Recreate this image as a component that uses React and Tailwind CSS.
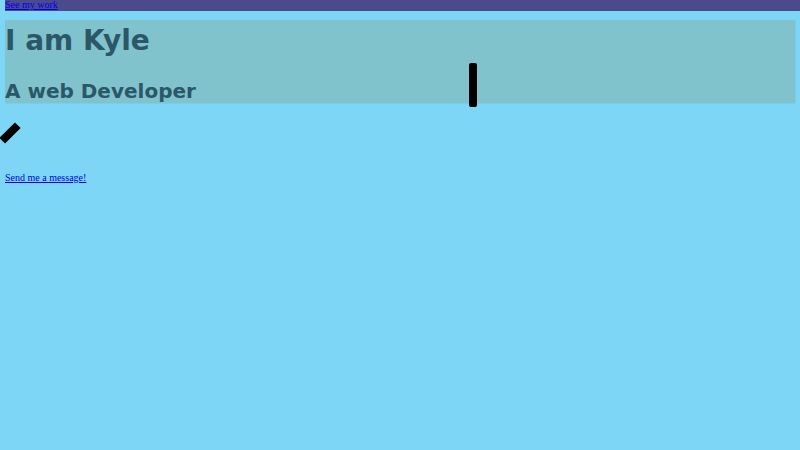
import React from 'react';

const App = () => {
  return (
    <div className="relative min-h-[450px] bg-[#7dd6f5] pl-[5px] pr-[5px] font-['Liberation_Serif',serif]">
      {/* Nav */}
      <nav className="-mr-[5px] h-[11px] bg-[#4a4a8c] text-[10px] leading-[10px]">
        <a href="#work" className="text-[#0000ee] underline">See my work</a>
      </nav>

      {/* Hero */}
      <header className="mt-[9px] flex flex-col bg-[#80c3cc] pt-[4px] shadow-[1px_1px_1px_rgba(0,0,0,0.04)] font-['DejaVu_Sans',Verdana,sans-serif] font-bold text-[#2b5768]">
        <h1 className="text-[28px] leading-[33px]">I am Kyle</h1>
        <h2 className="mt-[23px] text-[20px] leading-[23px]">A web Developer</h2>
      </header>

      {/* cursor bars */}
      <div className="absolute left-[469px] top-[63px] h-[44px] w-[8px] rounded-[2px] bg-black" />
      <div className="absolute left-[6px] top-[122px] h-[22px] w-[8px] rotate-[45deg] bg-black" />

      <div className="mt-[69px] text-[10px] leading-[11px]">
        <a href="#contact" className="text-[#0000ee] underline">Send me a message!</a>
      </div>
    </div>
  );
};

export default App;
